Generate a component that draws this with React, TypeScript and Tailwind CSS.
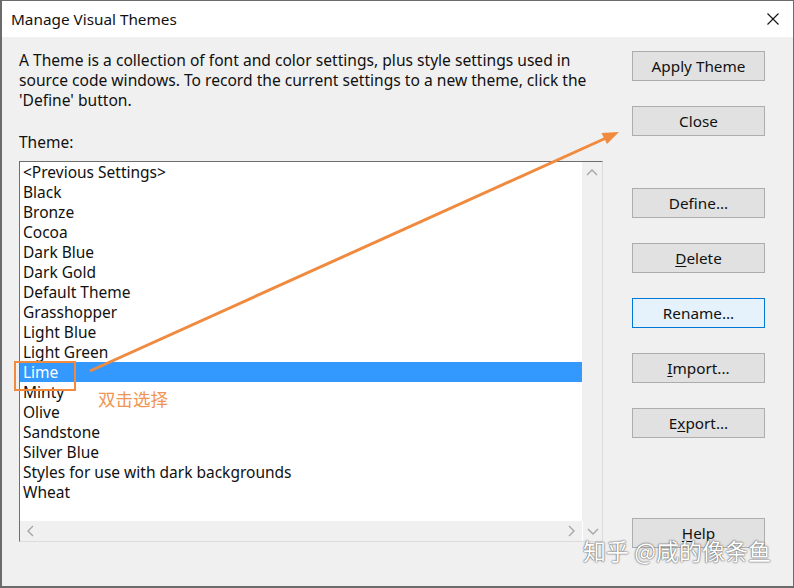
import React from 'react';

const themes = [
  '<Previous Settings>',
  'Black',
  'Bronze',
  'Cocoa',
  'Dark Blue',
  'Dark Gold',
  'Default Theme',
  'Grasshopper',
  'Light Blue',
  'Light Green',
  'Lime',
  'Minty',
  'Olive',
  'Sandstone',
  'Silver Blue',
  'Styles for use with dark backgrounds',
  'Wheat',
];

function Btn({ children, mt, focused }: { children: React.ReactNode; mt: string; focused?: boolean }) {
  return (
    <button
      className={
        'w-[133px] h-[30px] text-[15.3px] text-[#111] border ' +
        mt +
        (focused ? ' bg-[#e5f1fb] border-[#0078d7]' : ' bg-[#e1e1e1] border-[#adadad]')
      }
    >
      {children}
    </button>
  );
}

function Chevron({ dir }: { dir: 'up' | 'down' | 'left' | 'right' }) {
  const d = {
    up: 'M1 7 L6 2 L11 7',
    down: 'M1 3 L6 8 L11 3',
    left: 'M7 1 L2 6 L7 11',
    right: 'M3 1 L8 6 L3 11',
  }[dir];
  const w = dir === 'up' || dir === 'down' ? 12 : 10;
  const h = dir === 'up' || dir === 'down' ? 10 : 12;
  return (
    <svg width={w} height={h} viewBox={`0 0 ${w} ${h}`} fill="none" stroke="#a6a6a6" strokeWidth="1.4">
      <path d={d} />
    </svg>
  );
}

export default function App() {
  return (
    <div
      className="relative w-[794px] h-[588px] overflow-hidden bg-[#f0f0f0] border-l-2 border-t border-r border-b-2 border-[#6b6b6b] text-[#111]"
      style={{ fontFamily: '"Noto Sans", "Open Sans", sans-serif' }}
    >
      {/* title bar */}
      <div className="h-[36px] bg-white flex items-center justify-between pl-[9px] pr-[14px]">
        <span className="text-[15.3px]">Manage Visual Themes</span>
        <svg width="12" height="12" viewBox="0 0 12 12" stroke="#111" strokeWidth="1.1">
          <path d="M0.5 0.5 L11.5 11.5 M11.5 0.5 L0.5 11.5" />
        </svg>
      </div>

      <div className="flex">
        {/* left column */}
        <div className="pl-[17px] pt-[13px] w-[630px]">
          <p className="text-[15.6px] leading-[20px] w-[600px] whitespace-nowrap">
            A Theme is a collection of font and color settings, plus style settings used in
            <br />
            source code windows. To record the current settings to a new theme, click the
            <br />
            'Define' button.
          </p>
          <div className="mt-[22px] text-[15.5px] leading-[20px]">Theme:</div>
          <div className="mt-[9px] w-[584px] h-[381px] border-t border-l border-[#6e6e6e] border-r border-b border-r-[#dcdcdc] border-b-[#dcdcdc] bg-white flex flex-col">
            <div className="flex flex-1 min-h-0">
              <ul className="flex-1 overflow-hidden text-[15.5px]">
                {themes.map((t) => (
                  <li
                    key={t}
                    className={
                      'h-[20px] leading-[20px] pl-[3px] whitespace-nowrap ' +
                      (t === 'Lime' ? 'bg-[#3399ff] text-white' : '')
                    }
                  >
                    {t}
                  </li>
                ))}
              </ul>
              <div className="w-[20px] bg-[#f0f0f0] flex justify-center pt-[6px]">
                <Chevron dir="up" />
              </div>
            </div>
            <div className="h-[20px] flex bg-[#f0f0f0]">
              <div className="flex-1 flex items-center justify-between px-[6px]">
                <Chevron dir="left" />
                <Chevron dir="right" />
              </div>
              <div className="w-[20px] border-l border-white flex items-center justify-center">
                <Chevron dir="down" />
              </div>
            </div>
          </div>
        </div>

        {/* buttons */}
        <div className="flex flex-col pt-[14px]">
          <Btn mt="">Apply Theme</Btn>
          <Btn mt="mt-[25px]">Close</Btn>
          <Btn mt="mt-[52px]">Define...</Btn>
          <Btn mt="mt-[25px]">
            <span className="underline underline-offset-2">D</span>elete
          </Btn>
          <Btn mt="mt-[25px]" focused>
            Rename...
          </Btn>
          <Btn mt="mt-[25px]">
            <span className="underline underline-offset-2">I</span>mport...
          </Btn>
          <Btn mt="mt-[25px]">
            E<span className="underline underline-offset-2">x</span>port...
          </Btn>
          <Btn mt="mt-[80px]">
            <span className="underline underline-offset-2">H</span>elp
          </Btn>
        </div>
      </div>

      {/* annotation overlay */}
      <svg className="absolute left-0 top-0 pointer-events-none" width="794" height="588" viewBox="0 0 794 588">
        <rect x="13" y="361" width="60" height="28" fill="none" stroke="#ef8a3e" strokeWidth="2" />
        <line x1="88" y1="370" x2="603" y2="137.5" stroke="#ef8a3e" strokeWidth="3" />
        <polygon points="617,131 605,143 599.5,132" fill="#ef8a3e" />
      </svg>
      <span
        className="absolute left-[96px] top-[386px] text-[17.5px] leading-[24px] text-[#ef9452]"
        style={{ fontFamily: '"Noto Sans CJK SC", sans-serif' }}
      >
        双击选择
      </span>
      <span
        className="absolute left-[581px] top-[533px] text-[23px] leading-[32px] text-white [text-shadow:0_0_2px_#555,0_0_1px_#555]"
        style={{ fontFamily: '"Noto Sans CJK SC", sans-serif' }}
      >
        知乎 @咸的像条鱼
      </span>
    </div>
  );
}
